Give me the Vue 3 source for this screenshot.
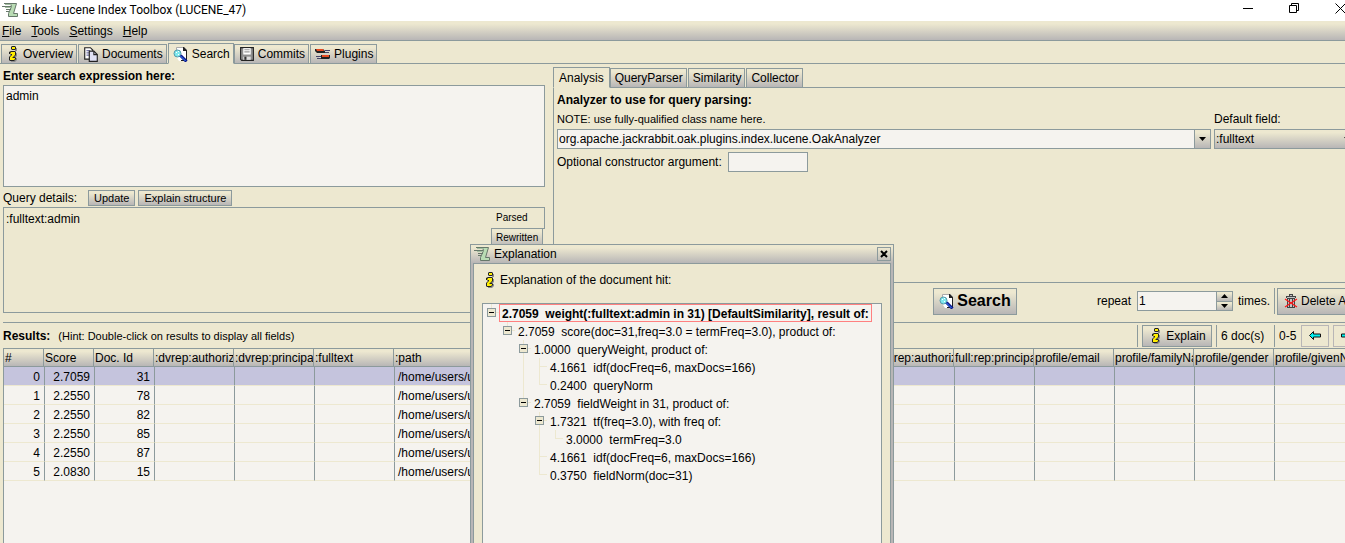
<script setup>
import { ref } from 'vue'

const menus = ['File', 'Tools', 'Settings', 'Help']
const tabs = [
  { name: 'Overview', icon: 'info' },
  { name: 'Documents', icon: 'docs' },
  { name: 'Search', icon: 'search' },
  { name: 'Commits', icon: 'disk' },
  { name: 'Plugins', icon: 'plug' }
]
const activeTab = ref('Search')
const sideTabs = ['Analysis', 'QueryParser', 'Similarity', 'Collector']
const activeSide = ref('Analysis')

const expression = ref('admin')
const analyzer = ref('org.apache.jackrabbit.oak.plugins.index.lucene.OakAnalyzer')
const argument = ref('')
const repeat = ref('1')

const columns = ['#', 'Score', 'Doc. Id', ':dvrep:authorizableId', ':dvrep:principalName', ':fulltext', ':path', '', '', '', '', '', 'full:rep:authorizableId', 'full:rep:principalName', 'profile/email', 'profile/familyName', 'profile/gender', 'profile/givenName']
const rows = [
  [0, '2.7059', 31],
  [1, '2.2550', 78],
  [2, '2.2550', 82],
  [3, '2.2550', 85],
  [4, '2.2550', 87],
  [5, '2.0830', 15]
]

const tree = [
  { guides: ['box'], value: '2.7059', text: 'weight(:fulltext:admin in 31) [DefaultSimilarity], result of:', selected: true },
  { guides: ['', 'box'], value: '2.7059', text: 'score(doc=31,freq=3.0 = termFreq=3.0), product of:' },
  { guides: ['', '', 'box more'], value: '1.0000', text: 'queryWeight, product of:' },
  { guides: ['', '', 'pass', 'tee'], value: '4.1661', text: 'idf(docFreq=6, maxDocs=166)' },
  { guides: ['', '', 'pass', 'elbow'], value: '0.2400', text: 'queryNorm' },
  { guides: ['', '', 'box'], value: '2.7059', text: 'fieldWeight in 31, product of:' },
  { guides: ['', '', '', 'box more'], value: '1.7321', text: 'tf(freq=3.0), with freq of:' },
  { guides: ['', '', '', 'pass', 'elbow'], value: '3.0000', text: 'termFreq=3.0' },
  { guides: ['', '', '', 'tee'], value: '4.1661', text: 'idf(docFreq=6, maxDocs=166)' },
  { guides: ['', '', '', 'elbow'], value: '0.3750', text: 'fieldNorm(doc=31)' }
]
</script>

<template>
  <div class="screen">
    <svg class="sprites" aria-hidden="true">
      <symbol id="luke" viewBox="0 0 16 16">
        <path d="M8.500 1.500h6l-3 10h4v3h-9v-3l3-7z" fill="#b9dcb4" stroke="#66786a" />
        <path d="M2 1.500h8M0 4.500h9M4 7.500h5M4 9.500h3" stroke="#66786a" fill="none" />
        <path d="M3 2.500h7M3 5.500h6" stroke="#a3bfa0" fill="none" />
      </symbol>
      <symbol id="info" viewBox="0 0 12 16">
        <path d="M8 2h2v3h-2zM8 7h2v3l-2 2h2v2l-2 2h-4v-1z" fill="#8c8c8c" />
        <path d="M5 0h3l1 1v2l-1 1h-3l-1-1v-2zM4 5h4l1 1v3l-2 2h1l1 1v1l-2 2h-4l-1-1v-3l2-2-1-1h-1v-2z" fill="#222" />
        <path d="M5 1h3v2h-3zM4 6h4v3l-3 3h3v1l-1 1h-4v-3l2-2v-1h-2z" fill="#ffee00" />
      </symbol>
      <symbol id="docs" viewBox="0 0 14 14">
        <path d="M1.500 1.500h5l2 2v8h-7z" fill="#fff" stroke="#222" />
        <path d="M3 4h3M3 6h3M3 8h3" stroke="#7777aa" />
        <path d="M5.500 4.500h4l3 3v6h-7z" fill="#dfe0f4" stroke="#222" />
        <path d="M9.500 4.500v3h3" fill="none" stroke="#222" />
      </symbol>
      <symbol id="search" viewBox="0 0 16 16">
        <path d="M4 1h7l3 3v11h-8l-2-3z" fill="#fff" />
        <path d="M3.500 4v-2.500h7" stroke="#aaa" fill="none" />
        <path d="M10 1h1l3 3v11h-6v-1h5v-9h-3z" fill="#222" />
        <circle cx="4.500" cy="7.500" r="3.500" fill="#7fe9ee" stroke="#5599aa" />
        <path d="M3 6h1v1h-1zM5 8h1v1h-1zM5 5h1v1h-1z" fill="#fff" />
        <path d="M7.500 9.500l6 6" stroke="#0a168c" stroke-width="3" />
        <path d="M7.500 10l5 5" stroke="#3a8cff" />
      </symbol>
      <symbol id="disk" viewBox="0 0 15 15">
        <path d="M1.500 1.500h12v12h-11l-1-1z" fill="#8e8e8e" stroke="#222" />
        <path d="M4 2h7v6h-7z" fill="#fff" />
        <path d="M5 3.500h5M5 5.500h5" stroke="#999" />
        <path d="M4 10h7v3h-7z" fill="#ddd" />
        <path d="M5 10h2v3h-2z" fill="#333" />
      </symbol>
      <symbol id="plug" viewBox="0 0 16 12">
        <path d="M0 1h8l2 2v2h-8l-2-2zM6 7h9v3l-1 1h-8z" fill="#222" />
        <path d="M1 1h7l1 2h-7zM7 7h7v2h-7z" fill="#e74a20" />
        <path d="M10 2.500h5M10 4.500h4M1 8.500h5M2 10.500h4" stroke="#446" />
        <path d="M10 3h2v1h-2zM4 9h2v1h-2z" fill="#ddd" />
      </symbol>
      <symbol id="trash" viewBox="0 0 14 14">
        <path d="M2 2h10v2h-1v10h-8v-10h-1zM5 0h4v2h-4z" fill="#444" />
        <path d="M6 1h2v1h-2zM3 3h8v1h-8zM4 5h1v8h-1zM6 5h2v8h-2zM9 5h1v8h-1z" fill="#c4c4c4" />
        <path d="M1 5l12 8M13 5l-12 8" stroke="#ff1616" stroke-width="1.200" />
      </symbol>
      <symbol id="arrow" viewBox="0 0 12 9">
        <path d="M.5 4.500l4-4v2.500h7v3h-7v2.500z" fill="#00f0f0" stroke="#111" />
      </symbol>
    </svg>

    <div class="shell">
      <header class="titlebar">
        <svg class="i16"><use href="#luke" /></svg>
        <span>Luke - Lucene Index Toolbox (LUCENE_47)</span>
      </header>
      <div class="winctl">
        <button aria-label="Minimize"><svg width="11" height="11"><path d="M0 5.500h10" stroke="#000" /></svg></button>
        <button aria-label="Restore"><svg width="11" height="11" fill="none" stroke="#000"><path d="M.5 2.500h7v7h-7zM2.500 2.500v-2h7v7h-2" /></svg></button>
        <button aria-label="Close"><svg width="11" height="11"><path d="M.5 .5l10 10M10.500 .5l-10 10" stroke="#000" /></svg></button>
      </div>

      <nav class="menubar">
        <button v-for="m in menus" :key="m"><u>{{ m[0] }}</u>{{ m.slice(1) }}</button>
      </nav>

      <div class="tabs main-tabs">
        <button v-for="t in tabs" :key="t.name" :class="{ on: t.name === activeTab }" @click="activeTab = t.name">
          <svg :class="t.icon === 'info' ? 'i14' : 'i16'"><use :href="'#' + t.icon" /></svg>{{ t.name }}
        </button>
      </div>

      <main>
        <section class="upper">
          <div class="query">
            <label class="bold" for="expr">Enter search expression here:</label>
            <textarea id="expr" v-model="expression" spellcheck="false"></textarea>
            <div class="details-bar">
              <span>Query details:</span>
              <button class="btn small">Update</button>
              <button class="btn small">Explain structure</button>
            </div>
            <div class="details">
              <p>:fulltext:admin</p>
              <div class="vtabs">
                <button class="on">Parsed</button>
                <button>Rewritten</button>
              </div>
            </div>
          </div>

          <div class="config">
            <div class="tabs side-tabs">
              <button v-for="t in sideTabs" :key="t" :class="{ on: t === activeSide }" @click="activeSide = t">{{ t }}</button>
            </div>
            <div class="analysis">
              <div class="analyzer">
                <label class="bold" for="analyzer">Analyzer to use for query parsing:</label>
                <p class="note">NOTE: use fully-qualified class name here.</p>
                <div class="combo">
                  <input id="analyzer" v-model="analyzer" spellcheck="false" />
                  <button aria-label="Show analyzers"><svg width="7" height="4"><path d="M0 0h7l-3.500 4z" /></svg></button>
                </div>
                <div class="arg">
                  <label for="arg">Optional constructor argument:</label>
                  <input id="arg" v-model="argument" />
                </div>
              </div>
              <div class="field">
                <label for="field">Default field:</label>
                <div class="picker">
                  <select id="field"><option>:fulltext</option></select>
                  <svg width="7" height="4"><path d="M0 0h7l-3.500 4z" /></svg>
                </div>
              </div>
            </div>
            <div class="actions">
              <button class="btn big"><svg class="i16"><use href="#search" /></svg>Search</button>
              <label for="repeat">repeat</label>
              <div class="spinner">
                <input id="repeat" v-model="repeat" />
                <div>
                  <button aria-label="Increase"><svg width="7" height="4"><path d="M0 4h7l-3.500-4z" /></svg></button>
                  <button aria-label="Decrease"><svg width="7" height="4"><path d="M0 0h7l-3.500 4z" /></svg></button>
                </div>
              </div>
              <span class="times">times.</span>
              <i class="sep"></i>
              <button class="btn delete"><svg class="i14"><use href="#trash" /></svg>Delete All</button>
            </div>
          </div>
        </section>

        <div class="results-bar">
          <b>Results:</b>
          <span class="hint">(Hint: Double-click on results to display all fields)</span>
          <div class="pager">
            <i class="sep"></i>
            <button class="btn explain"><svg class="i16"><use href="#info" /></svg>Explain</button>
            <i class="sep"></i>
            <span class="count">6 doc(s)</span>
            <i class="sep"></i>
            <span class="range">0-5</span>
            <button class="page" aria-label="Previous"><svg><use href="#arrow" /></svg></button>
            <button class="page next" aria-label="Next"><svg><use href="#arrow" /></svg></button>
          </div>
        </div>

        <div class="grid">
          <table>
            <colgroup>
              <col class="c-num" /><col class="c-score" /><col class="c-id" />
              <col v-for="n in 15" :key="n" class="c-field" />
            </colgroup>
            <thead>
              <tr><th v-for="(c, i) in columns" :key="i">{{ c }}</th></tr>
            </thead>
            <tbody>
              <tr v-for="(r, i) in rows" :key="i" :class="{ picked: i === 0 }">
                <td v-for="v in r" :key="v" class="num">{{ v }}</td>
                <td></td><td></td><td></td>
                <td>/home/users/u</td>
                <td v-for="n in 11" :key="'e' + n"></td>
              </tr>
            </tbody>
          </table>
        </div>
      </main>
    </div>

    <div class="dialog" role="dialog" aria-label="Explanation">
      <div class="dialog-title">
        <svg class="i16"><use href="#luke" /></svg>
        <span>Explanation</span>
        <button aria-label="Close dialog"><svg width="8" height="8"><path d="M1 1l6 6M7 1l-6 6" stroke="#000" stroke-width="2" /></svg></button>
      </div>
      <div class="dialog-body">
        <p class="caption"><svg class="i16"><use href="#info" /></svg>Explanation of the document hit:</p>
        <ul class="tree">
          <li v-for="(n, i) in tree" :key="i">
            <template v-for="(g, j) in n.guides" :key="j">
              <span class="guide" :class="g"><button v-if="g.startsWith('box')" aria-label="Collapse"></button></span>
            </template>
            <span class="node" :class="{ selected: n.selected }">{{ n.value }}&nbsp; {{ n.text }}</span>
          </li>
        </ul>
      </div>
    </div>
  </div>
</template>

<style>
body { background: #ede8d0; }
</style>

<style scoped>
.screen {
  --line: #8c9a9c;
  --bg: #ede8d0;
  --paper: #f5f3ef;
  --grad: linear-gradient(#ede8d0 15%, #b8b6b6);
  position: relative;
  height: 100vh;
  overflow: hidden;
  background: var(--bg);
  color: #000;
  font: 12px/16px "Liberation Sans", Arial, sans-serif;
}
.screen * { box-sizing: border-box; }
button, input, textarea, select { font: inherit; color: inherit; margin: 0; padding: 0; border: 0; border-radius: 0; background: none; outline: 0; }
p, ul { margin: 0; padding: 0; list-style: none; }
svg { flex: none; }
.sprites { position: absolute; width: 0; height: 0; }
.i16 { width: 16px; height: 16px; }
.i14 { width: 14px; height: 14px; }
.bold { font-weight: bold; }
.shell { width: calc(100% + 48px); height: 100%; display: flex; flex-direction: column; }

.titlebar { height: 21px; flex: none; background: #fff; display: flex; align-items: center; gap: 4px; padding: 0 2px 2px; font: 12px/16px Roboto, "Noto Sans", sans-serif; }
.winctl { position: absolute; top: 0; right: -1px; display: flex; gap: 35px; height: 17px; align-items: center; }
.winctl button { display: flex; }

.menubar { flex: none; height: 20px; display: flex; align-items: center; gap: 10px; padding-left: 2px; background: var(--grad); border-bottom: 1px solid var(--line); }

.tabs { display: flex; align-items: flex-end; border-bottom: 1px solid var(--line); }
.tabs button { display: flex; align-items: center; height: 20px; border: 1px solid var(--line); background: var(--grad); margin: 0 1px -1px 0; }
.tabs button.on { height: 21px; margin-right: 0; background: var(--bg); border-bottom-color: var(--bg); }
.main-tabs { flex: none; height: 23px; padding-left: 1px; }
.main-tabs button { padding: 0 3px 0 4px; gap: 3px; }
.main-tabs .i14 { height: 16px; }

main { flex: 1; min-height: 0; display: flex; flex-direction: column; padding-left: 3px; }
.upper { display: grid; grid-template-columns: 542px 1fr; gap: 8px; border-bottom: 1px solid var(--line); }
.query { display: flex; flex-direction: column; padding: 4px 0 9px; }
.query textarea { height: 102px; margin-top: 1px; border: 1px solid var(--line); background: var(--paper); padding: 2px; resize: none; }
.details-bar { display: flex; align-items: center; height: 20px; padding-top: 1px; }
.details-bar span { width: 85px; }
.btn { display: flex; align-items: center; justify-content: center; border: 1px solid var(--line); background: var(--grad); white-space: nowrap; }
.small { height: 16px; padding: 0 5px; margin-right: 3px; font-size: 11px; line-height: 14px; }
.details { flex: 1; min-height: 106px; display: flex; }
.details p { flex: 1; padding: 3px 2px; border: 1px solid var(--line); }
.vtabs { width: 54px; margin-left: -1px; font-size: 10px; }
.vtabs button { display: block; width: 52px; height: 20px; padding-left: 4px; text-align: left; border: 1px solid var(--line); background: var(--grad); }
.vtabs .on { position: relative; width: 54px; height: 22px; margin-bottom: -1px; padding-left: 5px; border-left: 0; background: var(--bg); }

.config { display: flex; flex-direction: column; min-width: 0; padding-top: 3px; }
.side-tabs { height: 21px; }
.side-tabs button { padding: 0 3px 0 4px; }
.side-tabs button.on { padding: 0 5px; }
.analysis { flex: 1; display: flex; gap: 3px; padding: 4px 36px 0 3px; border-left: 1px solid var(--line); border-bottom: 1px solid var(--line); }
.analyzer { flex: 1; min-width: 0; }
.analyzer > label { display: block; }
.note { font-size: 11px; line-height: 16px; margin: 3px 0 2px; }
.combo { display: flex; height: 20px; border: 1px solid var(--line); }
.combo input { flex: 1; min-width: 0; background: var(--paper); padding-left: 1px; }
.combo button { width: 16px; border-left: 1px solid var(--line); background: var(--grad); display: flex; align-items: center; justify-content: center; }
.arg { display: flex; align-items: center; gap: 6px; margin-top: 3px; }
.arg input { width: 80px; height: 20px; border: 1px solid var(--line); background: var(--paper); }
.field { width: 143px; padding-top: 19px; display: flex; flex-direction: column; gap: 2px; }
.picker { position: relative; height: 20px; border: 1px solid var(--line); background: var(--grad); }
.picker select { appearance: none; width: 100%; height: 18px; padding-left: 1px; }
.picker svg { position: absolute; right: 5px; top: 7px; }
.actions { display: flex; align-items: center; height: 39px; padding: 0 16px 3px 0; }
.sep { width: 1px; align-self: stretch; background: var(--line); }
.big { width: 84px; height: 27px; gap: 2px; margin: 0 80px 0 auto; font-size: 16px; font-weight: bold; }
.spinner { display: flex; width: 96px; height: 20px; margin: 0 5px 0 6px; border: 1px solid var(--line); }
.spinner input { flex: 1; min-width: 0; padding-left: 1px; background: var(--paper); }
.spinner div { width: 16px; display: flex; flex-direction: column; border-left: 1px solid var(--line); }
.spinner button { flex: 1; display: flex; align-items: center; justify-content: center; background: var(--grad); }
.spinner button + button { border-top: 1px solid var(--line); }
.times { width: 34px; }
.actions .sep { margin: 5px 2px; }
.delete { width: 100px; height: 27px; gap: 3px; padding-left: 6px; justify-content: flex-start; }

.results-bar { flex: none; display: flex; align-items: center; height: 25px; }
.hint { margin-left: 8px; font-size: 11px; }
.pager { margin-left: auto; display: flex; align-items: center; width: 256px; height: 22px; }
.explain { width: 70px; height: 22px; gap: 2px; margin: 0 4px; }
.count { width: 57px; padding-left: 4px; }
.range { width: 26px; padding-left: 4px; }
.page { width: 28px; height: 22px; margin-right: 4px; border: 1px solid #b8b6b6; display: flex; align-items: center; justify-content: center; flex: none; }
.page svg { width: 12px; height: 9px; }
.next svg { transform: rotate(180deg); }

.grid { flex: 1; overflow: hidden; border: 1px solid var(--line); border-bottom: 0; background: var(--paper); }
table { table-layout: fixed; width: 1350px; border-collapse: separate; border-spacing: 0; }
.c-num { width: 40px; }
.c-score { width: 50px; }
.c-id { width: 60px; }
.c-field { width: 80px; }
th, td { overflow: hidden; white-space: nowrap; }
th { height: 18px; padding: 0 0 0 1px; text-align: left; font-weight: normal; background: var(--grad); border-right: 1px solid var(--line); border-bottom: 1px solid var(--line); }
td { height: 19px; padding: 1px 3px 0; border-left: 1px solid var(--line); border-bottom: 1px solid var(--bg); }
td:first-child { border-left: 0; }
.num { text-align: right; padding-right: 4px; }
.picked { background: #c5c4dd; }

.dialog { position: absolute; left: 470px; top: 244px; width: 424px; bottom: -24px; display: flex; flex-direction: column; border: 1px solid var(--line); background: #b8b6b6; padding: 0 2px 2px; }
.dialog-title { display: flex; align-items: center; gap: 4px; height: 18px; margin: 0 -2px; padding: 0 2px 0 3px; background: var(--grad); }
.dialog-title button { width: 14px; height: 14px; margin-left: auto; border: 1px solid var(--line); display: flex; align-items: center; justify-content: center; }
.dialog-body { flex: 1; display: flex; flex-direction: column; border: 1px solid var(--line); background: var(--bg); padding: 8px; }
.caption { display: flex; align-items: center; gap: 2px; margin-bottom: 15px; }
.tree { flex: 1; border: 1px solid var(--line); background: var(--paper); }
.tree li { display: flex; height: 18px; }
.guide { position: relative; width: 16px; flex: none; }
.guide::before, .guide::after { content: ""; position: absolute; background: transparent; }
.guide::before { left: 8px; top: 0; width: 1px; height: 9px; }
.guide::after { left: 8px; top: 8px; height: 1px; width: 8px; }
.guide.pass::before, .guide.tee::before, .guide.elbow::before, .guide.box::before,
.guide.tee::after, .guide.elbow::after, .guide.box::after { background: var(--bg); }
.guide.pass::before, .guide.tee::before, .guide.more::before { height: 18px; }
.guide button { position: absolute; z-index: 1; left: 4px; top: 4px; width: 9px; height: 9px; border: 1px solid var(--line); background: linear-gradient(#000, #000) center / 5px 1px no-repeat, var(--bg); }
.node { height: 18px; padding: 0 2px; border: 1px solid transparent; white-space: nowrap; line-height: 18px; }
.node.selected { border: 1px solid #ff8080; font-weight: bold; }
</style>
